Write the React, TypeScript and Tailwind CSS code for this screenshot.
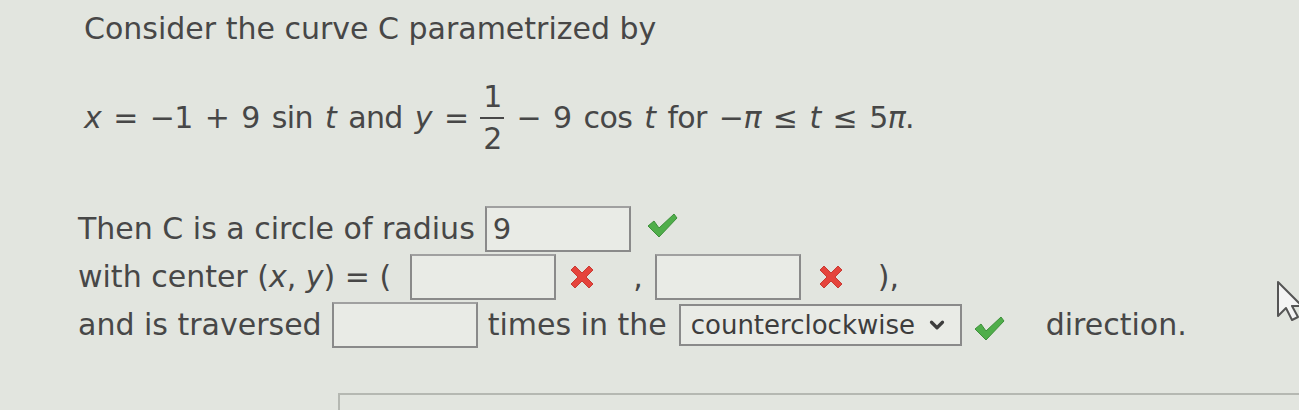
import { ChevronDown } from 'lucide-react';

function Check() {
    return (
        <svg width="34" height="28" viewBox="0 0 34 28">
            <path d="M3 15 L9 10 L14 17 L29 3 L32 7 L14 26 Z" fill="#4fae4a" stroke="#3d8f3a" strokeWidth="1" strokeLinejoin="round" />
        </svg>
    );
}

function Cross() {
    return (
        <svg width="30" height="30" viewBox="0 0 30 30">
            <path d="M4 8 L8 4 L15 11 L22 4 L26 8 L19 15 L26 22 L22 26 L15 19 L8 26 L4 22 L11 15 Z" fill="#e5443c" stroke="#c93a33" strokeWidth="1" strokeLinejoin="round" />
        </svg>
    );
}

function Box({ value = '' }: { value?: string }) {
    return (
        <div className="w-[146px] h-[46px] border-2 border-[#8a8a8a] border-t-[#a0a0a0] bg-[#e9ebe6] flex items-center px-[6px] text-[29px]">
            {value}
        </div>
    );
}

export default function App() {
    return (
        <div className="w-[1299px] h-[410px] bg-[#e2e5df] overflow-hidden relative font-['DejaVu_Sans',sans-serif] text-[#474747] text-[30px] leading-none">
            {/* question text */}
            <div className="pl-[84px] pt-[14px]">Consider the curve C parametrized by</div>

            <div className="pl-[84px] mt-[38px] flex items-center gap-[12px] tracking-[-0.6px]">
                <span className="italic">x</span>
                <span>=</span>
                <span>−1</span>
                <span>+</span>
                <span>9</span>
                <span>sin</span>
                <span className="italic">t</span>
                <span>and</span>
                <span className="italic">y</span>
                <span>=</span>
                <span className="inline-flex flex-col items-center">
                    <span>1</span>
                    <span className="w-[24px] h-[2px] bg-[#474747] my-[5px]"></span>
                    <span>2</span>
                </span>
                <span>−</span>
                <span>9</span>
                <span>cos</span>
                <span className="italic">t</span>
                <span>for</span>
                <span>−<span className="italic">π</span></span>
                <span>≤</span>
                <span className="italic">t</span>
                <span>≤</span>
                <span>5<span className="italic">π</span>.</span>
            </div>

            <div className="pl-[78px] mt-[52px] flex flex-col gap-[2px]">
                <div className="flex items-center">
                    <span>Then C is a circle of radius</span>
                    <div className="ml-[10px]"><Box value="9" /></div>
                    <div className="ml-[14px] mt-[-8px]"><Check /></div>
                </div>
                <div className="flex items-center">
                    <span>with center (<span className="italic">x</span>, <span className="italic">y</span>) = (</span>
                    <div className="ml-[19px]"><Box /></div>
                    <div className="ml-[11px]"><Cross /></div>
                    <span className="ml-[36px]">,</span>
                    <div className="ml-[12px]"><Box /></div>
                    <div className="ml-[15px]"><Cross /></div>
                    <span className="ml-[32px]">),</span>
                </div>
                <div className="flex items-center">
                    <span>and is traversed</span>
                    <div className="ml-[10px]"><Box /></div>
                    <span className="ml-[10px]">times in the</span>
                    <div className="ml-[12px] w-[283px] h-[42px] border-2 border-[#8a8a8a] bg-[#e9ebe6] flex items-center justify-between pl-[10px] pr-[12px] text-[26px] text-[#3d3d3d]">
                        <span>counterclockwise</span>
                        <ChevronDown size={22} strokeWidth={3.5} />
                    </div>
                    <div className="ml-[10px] mt-[6px]"><Check /></div>
                    <span className="ml-[40px]">direction.</span>
                </div>
            </div>

            <div className="ml-[338px] mt-[45px] h-[40px] border-t-2 border-l-2 border-[#b5b8b2]"></div>

            {/* mouse pointer */}
            <svg className="absolute left-[1276px] top-[280px]" width="24" height="44" viewBox="0 0 24 44">
                <path d="M2 2 L2 36 L10 28 L16 40 L22 37 L16 26 L26 26 Z" fill="#f4f4f4" stroke="#555" strokeWidth="2" strokeLinejoin="round" />
            </svg>
        </div>
    );
}
